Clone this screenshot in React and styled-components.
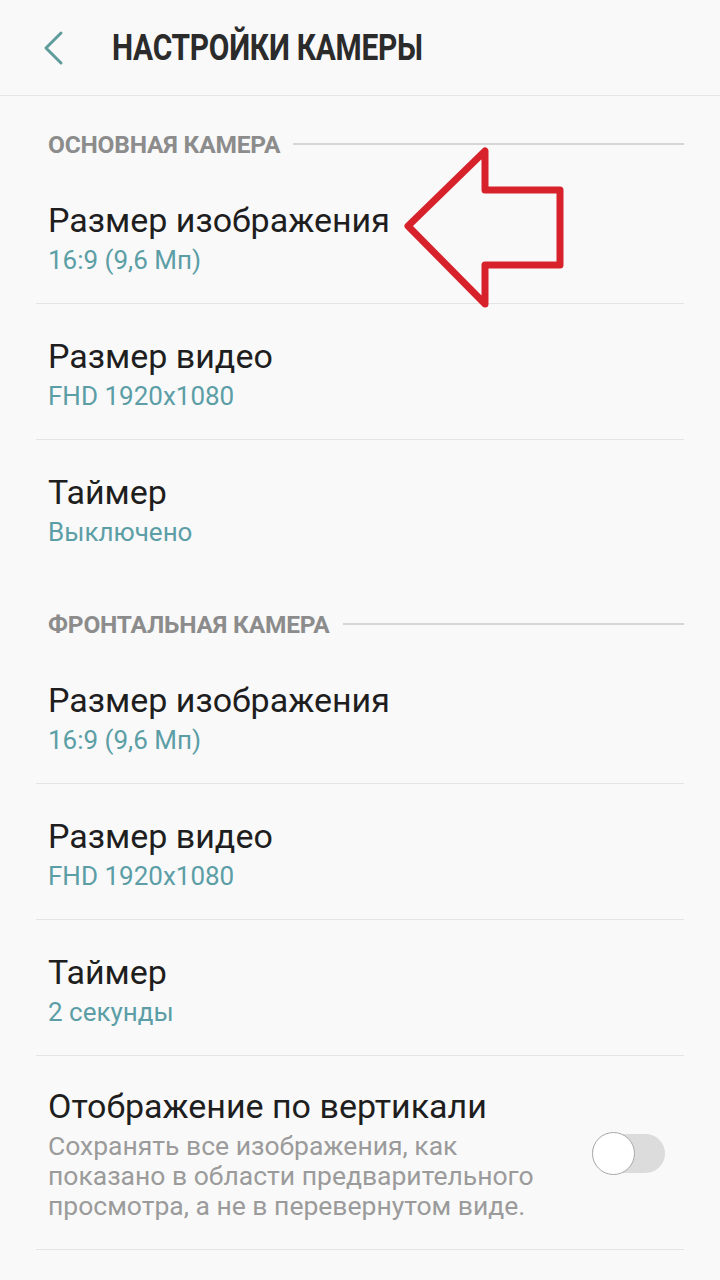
import React from "react";
import styled, { createGlobalStyle } from "styled-components";

const GlobalStyle = createGlobalStyle`
  html, body {
    margin: 0;
    padding: 0;
    background: #f9f9f9;
  }
  body {
    font-family: Roboto, "Noto Sans", sans-serif;
  }
`;

const mainCamera = [
  { title: "Размер изображения", value: "16:9 (9,6 Мп)" },
  { title: "Размер видео", value: "FHD 1920x1080" },
  { title: "Таймер", value: "Выключено" },
];

const frontCamera = [
  { title: "Размер изображения", value: "16:9 (9,6 Мп)" },
  { title: "Размер видео", value: "FHD 1920x1080" },
  { title: "Таймер", value: "2 секунды" },
];

const App = () => {
  return (
    <Page>
      <GlobalStyle />
      <Header>
        <BackButton>
          <svg width="24" height="36" viewBox="0 0 24 36">
            <polyline
              points="20,3 5,18 20,33"
              fill="none"
              stroke="#5f9c9a"
              strokeWidth="3"
              strokeLinecap="round"
              strokeLinejoin="round"
            />
          </svg>
        </BackButton>
        <HeaderTitle>НАСТРОЙКИ КАМЕРЫ</HeaderTitle>
      </Header>

      <Section>
        <SectionHeader>
          <SectionLabel>ОСНОВНАЯ КАМЕРА</SectionLabel>
          <SectionLine />
        </SectionHeader>
        {mainCamera.map((item, i) => (
          <Item key={i}>
            <ItemTitle>{item.title}</ItemTitle>
            <ItemValue>{item.value}</ItemValue>
          </Item>
        ))}
        <Arrow viewBox="0 0 170 170" width="170" height="170">
          <polygon
            points="7,77 84,2 84,41 159,41 159,116 84,116 84,155"
            fill="none"
            stroke="#d7222b"
            strokeWidth="7"
            strokeLinejoin="round"
          />
        </Arrow>
      </Section>

      <Section $second>
        <SectionHeader>
          <SectionLabel>ФРОНТАЛЬНАЯ КАМЕРА</SectionLabel>
          <SectionLine />
        </SectionHeader>
        {frontCamera.map((item, i) => (
          <Item key={i} $divided>
            <ItemTitle>{item.title}</ItemTitle>
            <ItemValue>{item.value}</ItemValue>
          </Item>
        ))}
        <SwitchItem>
          <SwitchText>
            <ItemTitle>Отображение по вертикали</ItemTitle>
            <Description>
              Сохранять все изображения, как показано в области
              предварительного просмотра, а не в перевернутом виде.
            </Description>
          </SwitchText>
          <Toggle>
            <Thumb />
          </Toggle>
        </SwitchItem>
      </Section>
    </Page>
  );
};

export default App;

const Page = styled.div`
  width: 720px;
  min-height: 1280px;
  background: #f9f9f9;
`;

const Header = styled.div`
  height: 95px;
  display: flex;
  align-items: center;
  border-bottom: 1px solid #e6e6e6;
`;

const BackButton = styled.div`
  width: 112px;
  display: flex;
  justify-content: flex-start;
  padding-left: 41px;
  box-sizing: border-box;
  svg {
    display: block;
  }
`;

const HeaderTitle = styled.h1`
  margin: 0;
  font-size: 36px;
  font-weight: 700;
  color: #2b2b2b;
  letter-spacing: -0.3px;
  white-space: nowrap;
  transform: scaleX(0.83);
  transform-origin: left center;
`;

const Section = styled.div`
  position: relative;
  margin: 0 36px;
  padding-top: ${(p) => (p.$second ? "25px" : "24px")};
`;

const SectionHeader = styled.div`
  height: 48px;
  display: flex;
  align-items: center;
  gap: 13px;
  padding-left: 12px;
`;

const SectionLabel = styled.span`
  font-size: 24.5px;
  font-weight: 700;
  color: #8c8c8c;
  letter-spacing: -0.2px;
  white-space: nowrap;
`;

const SectionLine = styled.div`
  flex: 1;
  height: 2px;
  background: #d6d6d6;
`;

const Item = styled.div`
  padding: 32px 12px 23px;
  border-bottom: 1px solid #e4e4e4;
  &:nth-child(4) {
    border-bottom: ${(p) => (p.$divided ? "1px solid #e4e4e4" : "none")};
  }
`;

const ItemTitle = styled.div`
  font-size: 34px;
  line-height: 40px;
  color: #1e1e1e;
  white-space: nowrap;
`;

const ItemValue = styled.div`
  font-size: 26px;
  line-height: 40px;
  color: #5c9ea6;
`;

const SwitchItem = styled.div`
  display: flex;
  align-items: center;
  padding: 30px 12px 28px;
  border-bottom: 1px solid #e4e4e4;
`;

const SwitchText = styled.div`
  flex: 1;
`;

const Description = styled.div`
  margin-top: 5px;
  max-width: 490px;
  font-size: 26.5px;
  line-height: 30px;
  color: #9b9b9b;
`;

const Toggle = styled.div`
  position: relative;
  width: 73px;
  height: 39px;
  margin-right: 7px;
  border-radius: 20px;
  background: #dcdcdc;
`;

const Thumb = styled.div`
  position: absolute;
  left: 0;
  top: -2px;
  width: 43px;
  height: 43px;
  border-radius: 50%;
  background: #ffffff;
  border: 1px solid #a8a8a8;
  box-sizing: border-box;
`;

const Arrow = styled.svg`
  position: absolute;
  left: 365px;
  top: 53px;
  overflow: visible;
`;
